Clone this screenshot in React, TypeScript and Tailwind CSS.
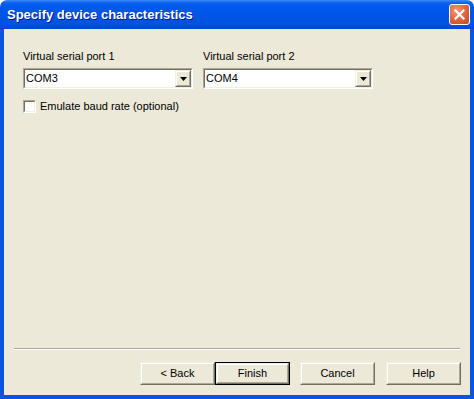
import React from "react";

const font = "font-['Tahoma','Liberation_Sans',sans-serif]";

function Combo({ value }: { value: string }) {
  return (
    <div className="h-[21px] w-[170px] border border-t-[#aca899] border-l-[#aca899] border-r-white border-b-white">
      <div className="flex h-full w-full items-center border border-t-[#716f64] border-l-[#716f64] border-r-[#f1efe2] border-b-[#f1efe2] bg-white">
        <span className="flex-1 pl-[1px] text-[11px] leading-[13px] text-black">{value}</span>
        <div className="h-[17px] w-[16px] border border-t-[#f1efe2] border-l-[#f1efe2] border-r-[#716f64] border-b-[#716f64]">
          <div className="flex h-full w-full items-center justify-center border border-t-white border-l-white border-r-[#aca899] border-b-[#aca899] bg-[#ece9d8]">
            <svg width="7" height="4" viewBox="0 0 7 4">
              <path d="M0 0h7L3.5 4z" fill="#000" />
            </svg>
          </div>
        </div>
      </div>
    </div>
  );
}

function PushButton({ label, isDefault = false }: { label: string; isDefault?: boolean }) {
  return (
    <div className={isDefault ? "h-[23px] w-[75px] border border-black" : "h-[23px] w-[75px]"}>
      <div className="h-full w-full border border-t-[#f1efe2] border-l-[#f1efe2] border-r-[#716f64] border-b-[#716f64]">
        <div className="flex h-full w-full items-center justify-center border border-t-white border-l-white border-r-[#aca899] border-b-[#aca899] bg-[#ece9d8] text-[11px] leading-[13px] text-black">
          {label}
        </div>
      </div>
    </div>
  );
}

export default function App() {
  return (
    <div className={`flex h-[399px] w-[474px] flex-col ${font}`}>
      <div className="flex h-[29px] shrink-0 items-center justify-between rounded-t-[7px] bg-[linear-gradient(to_bottom,#3d8cf5_0%,#0a62f0_10%,#0058ee_20%,#0055e5_55%,#0052df_85%,#0046d0_100%)] pl-[7px] pr-[4px]">
        <span className="font-['Liberation_Sans',sans-serif] text-[13px] font-bold leading-[16px] text-white [text-shadow:1px_1px_0_#0a1883]">
          Specify device characteristics
        </span>
        <div className="flex h-[21px] w-[21px] items-center justify-center rounded-[3px] border border-white bg-[radial-gradient(circle_at_35%_30%,#ef9a7c_0%,#e06a45_45%,#c8441f_100%)]">
          <svg width="11" height="11" viewBox="0 0 11 11">
            <path d="M1.5 1.5l8 8M9.5 1.5l-8 8" stroke="#fff" strokeWidth="2.2" strokeLinecap="square" />
          </svg>
        </div>
      </div>

      <div className="flex flex-1 flex-col border-x-4 border-b-4 border-[#0a55e0] bg-[#ece9d8] text-black">
        <div className="flex gap-[10px] pl-[19px] pt-[21px]">
          <div className="flex flex-col">
            <span className="text-[11px] leading-[13px]">Virtual serial port 1</span>
            <div className="mt-[5px]">
              <Combo value="COM3" />
            </div>
          </div>
          <div className="flex flex-col">
            <span className="text-[11px] leading-[13px]">Virtual serial port 2</span>
            <div className="mt-[5px]">
              <Combo value="COM4" />
            </div>
          </div>
        </div>

        <div className="mt-[11px] flex items-center gap-[4px] pl-[19px]">
          <div className="h-[13px] w-[13px] border border-t-[#aca899] border-l-[#aca899] border-r-white border-b-white">
            <div className="h-full w-full border border-t-[#716f64] border-l-[#716f64] border-r-[#f1efe2] border-b-[#f1efe2] bg-white" />
          </div>
          <span className="text-[11px] leading-[13px]">Emulate baud rate (optional)</span>
        </div>

        <div className="flex-1" />

        <div className="mx-[10px] border-t border-b border-t-[#aca899] border-b-white" />

        <div className="mt-[12px] mb-[10px] mr-[9px] flex justify-end">
          <PushButton label="< Back" />
          <PushButton label="Finish" isDefault />
          <div className="ml-[10px]">
            <PushButton label="Cancel" />
          </div>
          <div className="ml-[11px]">
            <PushButton label="Help" />
          </div>
        </div>
      </div>
    </div>
  );
}
